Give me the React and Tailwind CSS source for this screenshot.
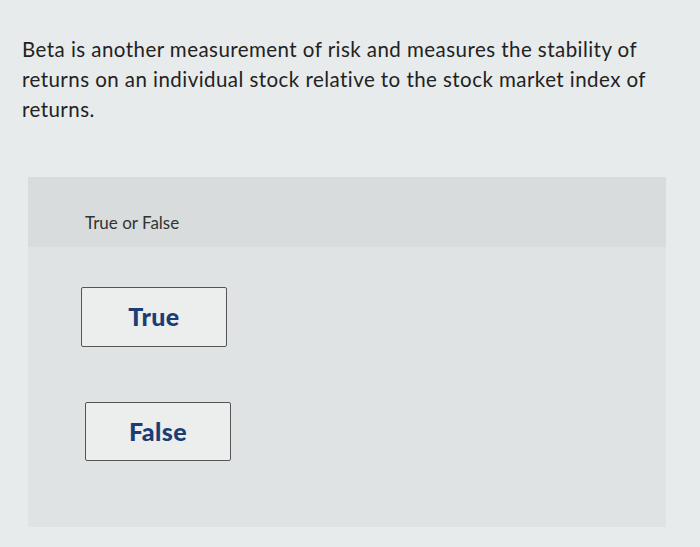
export default function App() {
  return (
    <div
      className="w-[700px] h-[547px] overflow-hidden bg-[#e8ebeb] text-[#222]"
      style={{ fontFamily: "Lato, 'Open Sans', sans-serif" }}
    >
      {/* Question */}
      <div className="ml-[22px] w-[640px] pt-[34px] text-[20.5px] leading-[30px] tracking-[0.45px]">
        Beta is another measurement of risk and measures the stability of
        returns on an individual stock relative to the stock market index of
        returns.
      </div>

      {/* Answer panel */}
      <div className="mt-[53px] ml-[28px] w-[638px] h-[350px] bg-[#e0e3e3]">
        <div className="h-[70px] bg-[#d8dcdc] flex items-center pl-[57px] pt-[22px] text-[17px] text-[#333]">
          True or False
        </div>

        <div className="flex flex-col gap-[55px] pt-[40px]">
          <button className="ml-[53px] w-[146px] h-[60px] border border-[#555] rounded-[2px] bg-[#eceeee] text-[25px] tracking-[0.4px] font-black text-[#1c3d73]">
            True
          </button>
          <button className="ml-[57px] w-[146px] h-[59px] border border-[#555] rounded-[2px] bg-[#eceeee] text-[25px] tracking-[0.4px] font-black text-[#1c3d73]">
            False
          </button>
        </div>
      </div>
    </div>
  );
}
